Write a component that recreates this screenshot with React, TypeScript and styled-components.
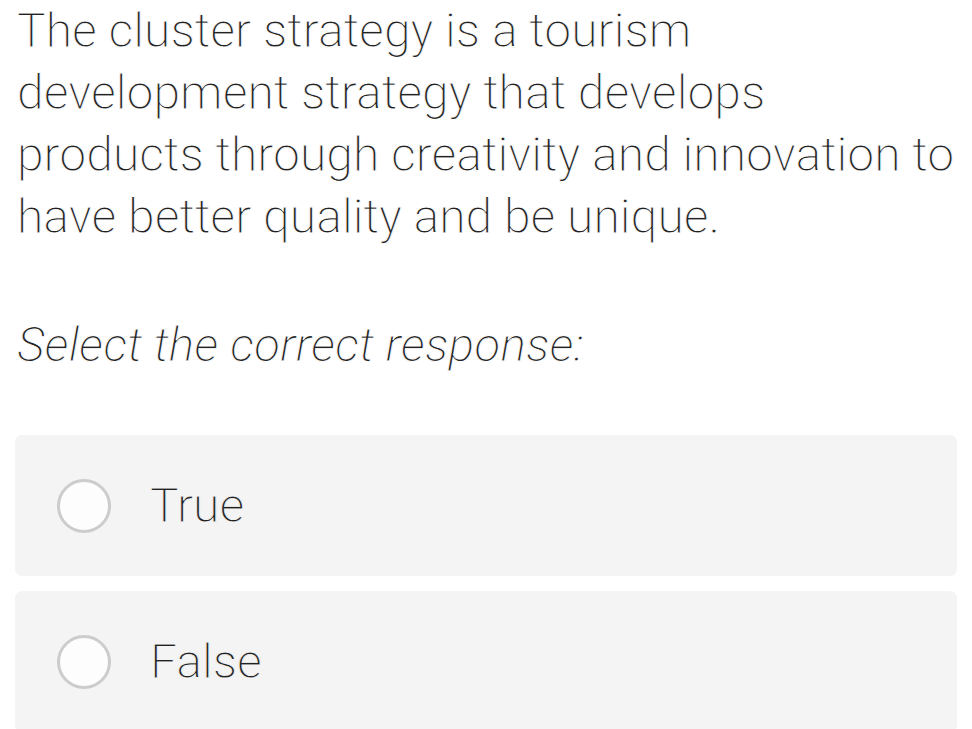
import React from "react";
import styled, { createGlobalStyle } from "styled-components";

const Global = createGlobalStyle`
  html, body { margin: 0; padding: 0; background: #ffffff; }
  body { font-family: "Roboto Light", Roboto, "Liberation Sans", sans-serif; color: #222222; }
`;

const Page = styled.div`
  display: flex;
  flex-direction: column;
  padding: 0 15px;
`;

const Question = styled.p`
  margin: 0;
  padding-left: 2px;
  font-size: 48px;
  line-height: 62px;
  font-weight: 300;
  white-space: nowrap;
  -webkit-text-stroke: 0.9px #ffffff;
`;

const Prompt = styled.p`
  margin: 66px 0 0;
  padding-left: 2px;
  font-size: 48px;
  line-height: 62px;
  font-weight: 300;
  font-style: italic;
  -webkit-text-stroke: 0.9px #ffffff;
`;

const Options = styled.div`
  display: flex;
  flex-direction: column;
  gap: 15px;
  margin-top: 59px;
`;

const Option = styled.label`
  display: flex;
  align-items: center;
  gap: 39px;
  height: 141px;
  padding-left: 42px;
  background: #f4f4f4;
  border-radius: 7px;
  cursor: pointer;
`;

const Radio = styled.span`
  width: 48px;
  height: 48px;
  border-radius: 50%;
  border: 3px solid #cccccc;
  background: #fdfdfd;
  flex: none;
`;

const OptionText = styled.span`
  font-size: 48px;
  font-weight: 300;
  line-height: 62px;
  color: #222222;
  -webkit-text-stroke: 0.9px #f4f4f4;
`;

export default function App() {
  return (
    <>
      <Global />
      <Page>
        <Question>
          The cluster strategy is a tourism
          <br />
          development strategy that develops
          <br />
          products through creativity and innovation to
          <br />
          have better quality and be unique.
        </Question>
        <Prompt>Select the correct response:</Prompt>
        <Options>
          {["True", "False"].map((o) => (
            <Option key={o}>
              <Radio />
              <OptionText>{o}</OptionText>
            </Option>
          ))}
        </Options>
      </Page>
    </>
  );
}
